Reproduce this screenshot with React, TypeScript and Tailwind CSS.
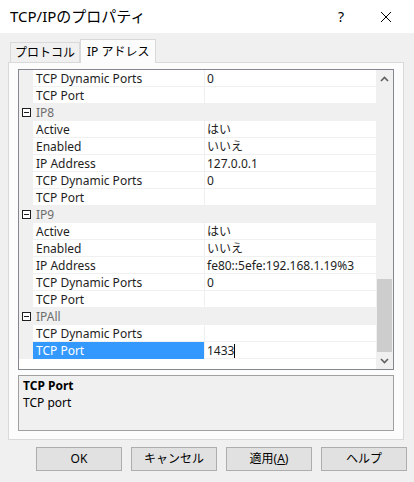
import React from 'react';

type Row =
  | { kind: 'cat'; name: string }
  | { kind: 'prop'; name: string; value?: string; selected?: boolean };

const rows: Row[] = [
  { kind: 'prop', name: 'TCP Dynamic Ports', value: '0' },
  { kind: 'prop', name: 'TCP Port' },
  { kind: 'cat', name: 'IP8' },
  { kind: 'prop', name: 'Active', value: 'はい' },
  { kind: 'prop', name: 'Enabled', value: 'いいえ' },
  { kind: 'prop', name: 'IP Address', value: '127.0.0.1' },
  { kind: 'prop', name: 'TCP Dynamic Ports', value: '0' },
  { kind: 'prop', name: 'TCP Port' },
  { kind: 'cat', name: 'IP9' },
  { kind: 'prop', name: 'Active', value: 'はい' },
  { kind: 'prop', name: 'Enabled', value: 'いいえ' },
  { kind: 'prop', name: 'IP Address', value: 'fe80::5efe:192.168.1.19%3' },
  { kind: 'prop', name: 'TCP Dynamic Ports', value: '0' },
  { kind: 'prop', name: 'TCP Port' },
  { kind: 'cat', name: 'IPAll' },
  { kind: 'prop', name: 'TCP Dynamic Ports' },
  { kind: 'prop', name: 'TCP Port', value: '1433', selected: true },
];

const font = { fontFamily: '"Noto Sans", "Noto Sans CJK JP", sans-serif' };

const MinusBox = () => (
  <svg width="9" height="9" viewBox="0 0 9 9" className="block">
    <rect x="0.5" y="0.5" width="8" height="8" fill="white" stroke="#1e1e1e" />
    <line x1="2" y1="4.5" x2="7" y2="4.5" stroke="#1e1e1e" />
  </svg>
);

const Chevron = ({ up }: { up?: boolean }) => (
  <svg width="9" height="6" viewBox="0 0 9 6" className="block">
    <path d={up ? 'M1 5 L4.5 1.5 L8 5' : 'M1 1 L4.5 4.5 L8 1'} fill="none" stroke="#606060" strokeWidth="1.6" />
  </svg>
);

function GridRow({ row }: { row: Row }) {
  if (row.kind === 'cat') {
    return (
      <div className="flex h-[17px] bg-[#f0f0f0]">
        <div className="w-[14px] flex items-center justify-center">
          <MinusBox />
        </div>
        <div className="flex-1 pl-[3px] pt-[1px] flex items-center text-[#6d6d6d]">{row.name}</div>
      </div>
    );
  }
  return (
    <div className="flex h-[17px]">
      <div className="w-[14px] bg-[#f0f0f0]" />
      <div
        className={
          row.selected
            ? 'w-[171px] pl-[3px] pt-[1px] flex items-center bg-[#3399ff] text-white border-b border-[#3399ff]'
            : 'w-[171px] pl-[3px] pt-[1px] flex items-center border-b border-[#f0f0f0] text-[#1e1e1e]'
        }
      >
        {row.name}
      </div>
      <div className="w-px bg-[#f0f0f0]" />
      <div className="flex-1 pl-[2px] pt-[1px] flex items-center border-b border-[#f0f0f0] text-[#1e1e1e]">
        {row.value}
        {row.selected && <span className="inline-block w-px h-[14px] bg-black" />}
      </div>
    </div>
  );
}

export default function App() {
  return (
    <div className="w-[414px] h-[482px] bg-[#f0f0f0] flex flex-col text-[12px] leading-none overflow-hidden" style={font}>
      <div className="h-[33px] bg-white flex items-center pl-[10px] text-[15px] text-black">
        <span className="flex-1">TCP/IPのプロパティ</span>
        <span className="w-[14px] text-[14px] mr-[28px]">?</span>
        <svg width="12" height="12" viewBox="0 0 12 12" className="mr-[22px]">
          <path d="M1 1 L11 11 M11 1 L1 11" stroke="#000" strokeWidth="1" />
        </svg>
      </div>

      <div className="ml-[10px] mt-[6px] flex items-end h-[23px]">
        <div className="h-[20px] px-[4px] border border-b-0 border-[#d9d9d9] bg-[#f0f0f0] flex items-center text-[12px] text-black">
          プロトコル
        </div>
        <div className="h-[24px] px-[6px] border border-b-0 border-[#d9d9d9] bg-[#fcfcfc] flex items-center text-[12px] text-black -mb-px relative z-10">
          IP アドレス
        </div>
      </div>

      <div className="ml-[8px] w-[396px] h-[378px] border border-[#d9d9d9] bg-[#fcfcfc] pl-[9px] pt-[6px]">
        <div className="w-[376px] h-[301px] border border-[#828790] bg-white flex">
          <div className="flex-1">
            {rows.map((r, i) => (
              <GridRow key={i} row={r} />
            ))}
          </div>
          <div className="w-[17px] bg-[#f0f0f0] flex flex-col">
            <div className="h-[17px] flex items-center justify-center">
              <Chevron up />
            </div>
            <div className="flex-1 flex flex-col justify-end px-[1px]">
              <div className="h-[73px] bg-[#cdcdcd]" />
            </div>
            <div className="h-[17px] flex items-center justify-center">
              <Chevron />
            </div>
          </div>
        </div>
        <div className="mt-[5px] w-[376px] h-[56px] border border-[#a0a0a0] bg-[#f0f0f0] pl-[4px] pt-[1px] text-black">
          <div className="font-bold h-[17px] flex items-center">TCP Port</div>
          <div className="h-[17px] flex items-center">TCP port</div>
        </div>
      </div>

      <div className="flex ml-[36px] mt-[7px] gap-[9px]">
        {['OK', 'キャンセル', '適用', 'ヘルプ'].map((b, i) => (
          <div
            key={i}
            className="w-[86px] h-[24px] border border-[#adadad] bg-[#e1e1e1] flex items-center justify-center text-black"
          >
            {b}
            {b === '適用' && (
              <span>
                (<span className="underline">A</span>)
              </span>
            )}
          </div>
        ))}
      </div>
    </div>
  );
}
